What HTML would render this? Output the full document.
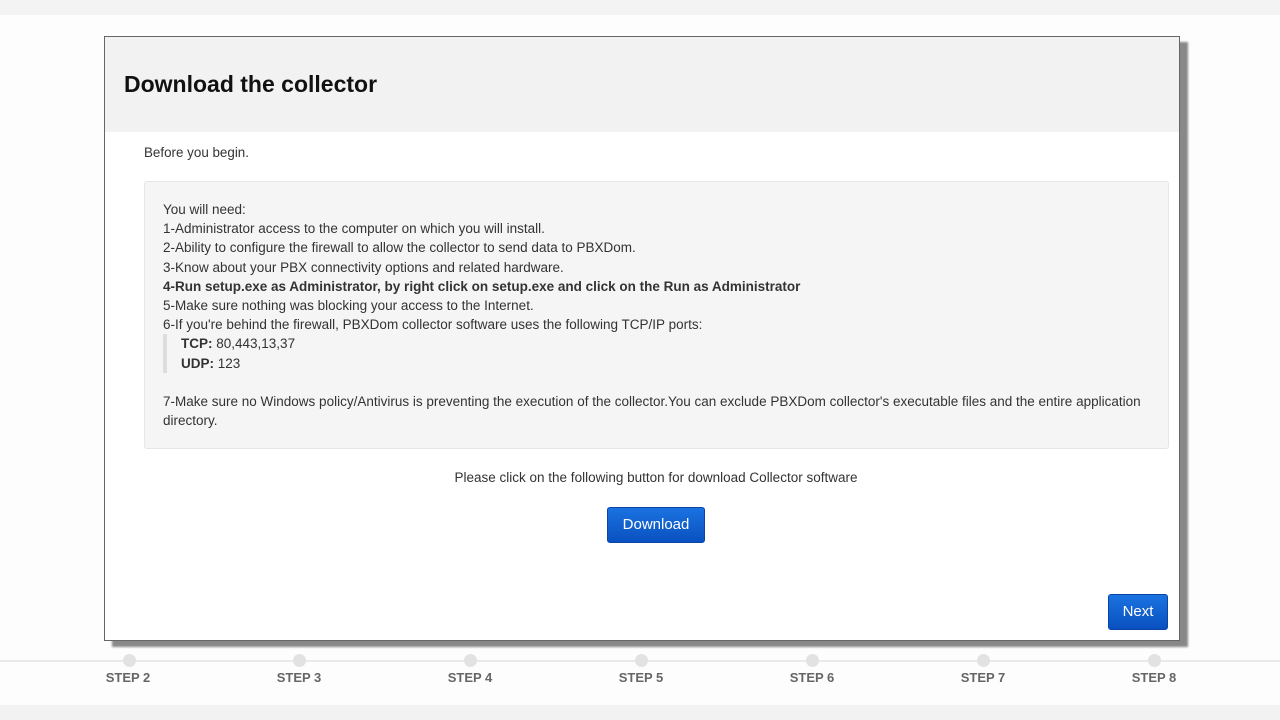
<!DOCTYPE html>
<html><head><meta charset="utf-8"><style>
body{margin:0;width:1280px;height:720px;background:#fdfdfd;font-family:"Liberation Sans",sans-serif;position:relative;overflow:hidden;color:#333}
.top{position:absolute;left:0;top:0;width:1280px;height:15px;background:#f3f3f3}
.bot{position:absolute;left:0;top:705px;width:1280px;height:15px;background:#f2f2f2}
.line{position:absolute;left:0;top:660px;width:1280px;height:2px;background:#eaeaea}
.dot{position:absolute;top:654px;width:13px;height:13px;border-radius:50%;background:#e2e2e2}
.lbl{position:absolute;top:670px;font-size:13px;font-weight:bold;color:#666;width:80px;text-align:center;margin-left:-1px}
.modal{position:absolute;left:104px;top:36px;width:1074px;height:603px;background:#fff;border:1px solid #666;box-shadow:8px 6px 2px #888}
.hdr{height:95px;background:#f2f2f2;position:relative}
.hdr h1{margin:0;position:absolute;left:19px;top:34px;font-size:23px;color:#111}
.p1{position:absolute;left:39px;top:108px;font-size:13.4px}
.box{position:absolute;left:39px;top:144px;width:1023px;height:266px;background:#f5f5f5;border:1px solid #e6e6e6;border-radius:3px;font-size:13.5px;line-height:19.2px}
.box .in{position:absolute;left:18px;top:18px;right:20px}
.bq{border-left:4px solid #ddd;padding-left:14px;margin:0 0 19px 0}
.c{position:absolute;left:0;width:1102px;text-align:center;font-size:13.5px;top:433px}
.btn{position:absolute;background:linear-gradient(#1a73e0,#0a50c0);color:#fff;font-size:15px;border:1px solid #0a45a5;border-radius:3px;text-align:center;line-height:34px;height:34px}
</style></head><body>
<div class="top"></div>
<div class="line"></div>
<div class="dot" style="left:123px"></div><div class="dot" style="left:293px"></div><div class="dot" style="left:464px"></div><div class="dot" style="left:635px"></div><div class="dot" style="left:806px"></div><div class="dot" style="left:977px"></div><div class="dot" style="left:1148px"></div>
<div class="lbl" style="left:89px">STEP 2</div><div class="lbl" style="left:260px">STEP 3</div><div class="lbl" style="left:431px">STEP 4</div><div class="lbl" style="left:602px">STEP 5</div><div class="lbl" style="left:773px">STEP 6</div><div class="lbl" style="left:944px">STEP 7</div><div class="lbl" style="left:1115px">STEP 8</div>
<div class="bot"></div>
<div class="modal">
<div class="hdr"><h1>Download the collector</h1></div>
<div class="p1">Before you begin.</div>
<div class="box"><div class="in">
You will need:<br>1-Administrator access to the computer on which you will install.<br>2-Ability to configure the firewall to allow the collector to send data to PBXDom.<br>3-Know about your PBX connectivity options and related hardware.<br><b>4-Run setup.exe as Administrator, by right click on setup.exe and click on the Run as Administrator</b><br>5-Make sure nothing was blocking your access to the Internet.<br>6-If you're behind the firewall, PBXDom collector software uses the following TCP/IP ports:
<div class="bq"><b>TCP:</b> 80,443,13,37<br><b>UDP:</b> 123</div>
7-Make sure no Windows policy/Antivirus is preventing the execution of the collector.You can exclude PBXDom collector's executable files and the entire application directory.
</div></div>
<div class="c">Please click on the following button for download Collector software</div>
<div class="btn" style="left:502px;top:470px;width:96px">Download</div>
<div class="btn" style="left:1003px;top:557px;width:58px">Next</div>
</div>
</body></html>
